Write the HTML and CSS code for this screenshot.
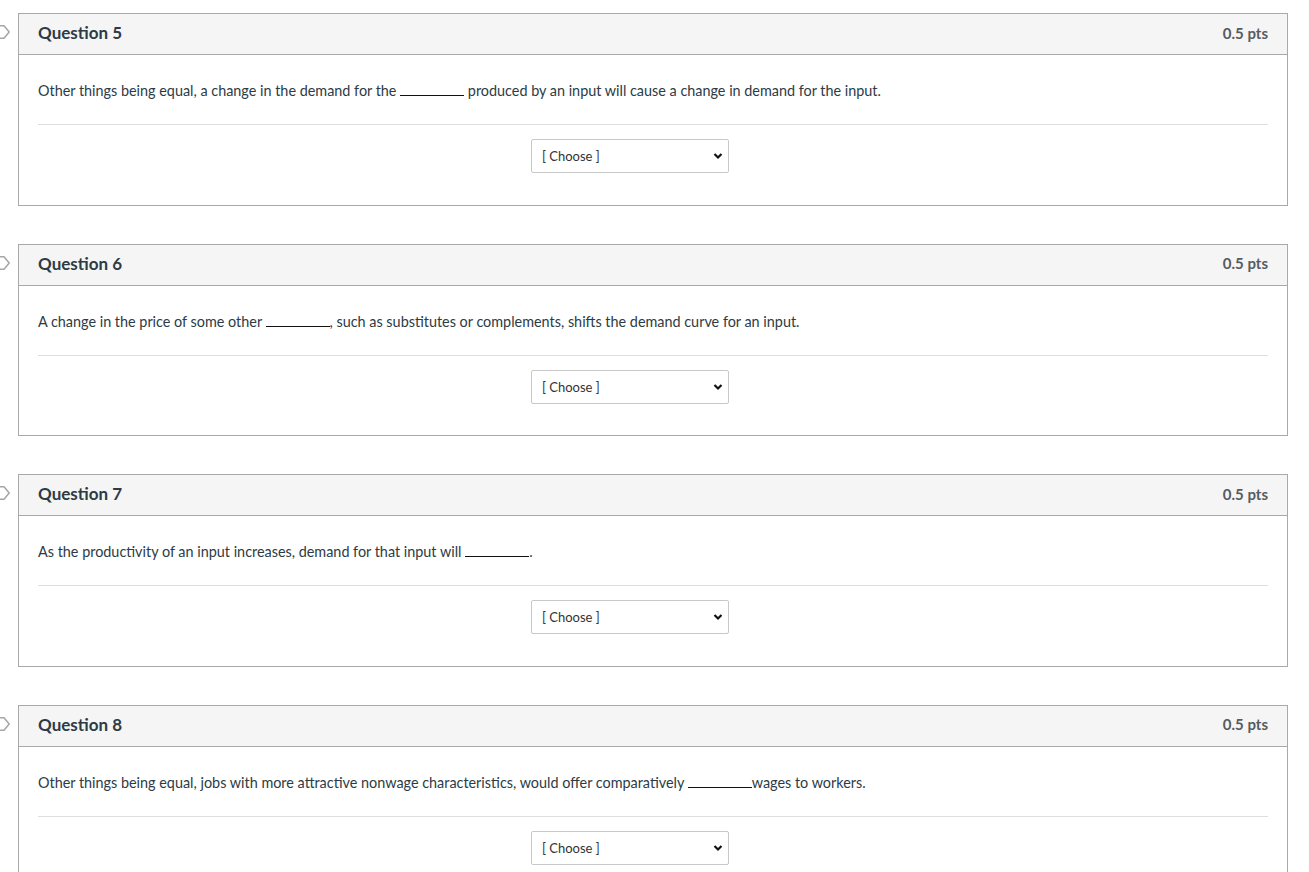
FILE: index.html
```html
<!DOCTYPE html>
<html>
<head>
<meta charset="utf-8">
<link rel="stylesheet" href="styles.css">
</head>
<body>
<div class="list">
  <div class="item">
    <svg class="flag" width="10" height="14" viewBox="0 0 10 14"><path d="M-6 0.75 H4 L9.2 7 L4 13.25 H-6" fill="#fff" stroke="#a6a6a6" stroke-width="1.5" stroke-linejoin="round"/></svg>
    <div class="question">
      <div class="header"><span class="title">Question 5</span><span class="pts">0.5 pts</span></div>
      <div class="content">
        <p class="text">Other things being equal, a change in the demand for the <span class="blank"></span> produced by an input will cause a change in demand for the input.</p>
        <div class="answers">
          <div class="select"><span>[ Choose ]</span><svg width="10" height="8" viewBox="0 0 10 8"><path d="M1.5 2 L5 5.5 L8.5 2" fill="none" stroke="#111" stroke-width="2.2"/></svg></div>
        </div>
      </div>
    </div>
  </div>
  <div class="item">
    <svg class="flag" width="10" height="14" viewBox="0 0 10 14"><path d="M-6 0.75 H4 L9.2 7 L4 13.25 H-6" fill="#fff" stroke="#a6a6a6" stroke-width="1.5" stroke-linejoin="round"/></svg>
    <div class="question">
      <div class="header"><span class="title">Question 6</span><span class="pts">0.5 pts</span></div>
      <div class="content">
        <p class="text">A change in the price of some other <span class="blank"></span>, such as substitutes or complements, shifts the demand curve for an input.</p>
        <div class="answers">
          <div class="select"><span>[ Choose ]</span><svg width="10" height="8" viewBox="0 0 10 8"><path d="M1.5 2 L5 5.5 L8.5 2" fill="none" stroke="#111" stroke-width="2.2"/></svg></div>
        </div>
      </div>
    </div>
  </div>
  <div class="item">
    <svg class="flag" width="10" height="14" viewBox="0 0 10 14"><path d="M-6 0.75 H4 L9.2 7 L4 13.25 H-6" fill="#fff" stroke="#a6a6a6" stroke-width="1.5" stroke-linejoin="round"/></svg>
    <div class="question">
      <div class="header"><span class="title">Question 7</span><span class="pts">0.5 pts</span></div>
      <div class="content">
        <p class="text">As the productivity of an input increases, demand for that input will <span class="blank"></span>.</p>
        <div class="answers">
          <div class="select"><span>[ Choose ]</span><svg width="10" height="8" viewBox="0 0 10 8"><path d="M1.5 2 L5 5.5 L8.5 2" fill="none" stroke="#111" stroke-width="2.2"/></svg></div>
        </div>
      </div>
    </div>
  </div>
  <div class="item">
    <svg class="flag" width="10" height="14" viewBox="0 0 10 14"><path d="M-6 0.75 H4 L9.2 7 L4 13.25 H-6" fill="#fff" stroke="#a6a6a6" stroke-width="1.5" stroke-linejoin="round"/></svg>
    <div class="question">
      <div class="header"><span class="title">Question 8</span><span class="pts">0.5 pts</span></div>
      <div class="content">
        <p class="text">Other things being equal, jobs with more attractive nonwage characteristics, would offer comparatively <span class="blank"></span>wages to workers.</p>
        <div class="answers">
          <div class="select"><span>[ Choose ]</span><svg width="10" height="8" viewBox="0 0 10 8"><path d="M1.5 2 L5 5.5 L8.5 2" fill="none" stroke="#111" stroke-width="2.2"/></svg></div>
        </div>
      </div>
    </div>
  </div>
</div>
</body>
</html>
```
FILE: styles.css
```css
html, body {
  margin: 0;
  padding: 0;
  background: #fff;
}
body {
  font-family: Lato, "Open Sans", "Liberation Sans", sans-serif;
  color: #2d3b45;
  overflow: hidden;
}
.list {
  padding-top: 13px;
  width: 1288px;
}
.item {
  display: flex;
  align-items: flex-start;
  margin-bottom: 38px;
}
.flag {
  flex: none;
  margin-top: 12px;
  margin-right: 8px;
}
.question {
  flex: 1;
  border: 1px solid #a9a9a9;
  height: 190.67px;
  box-sizing: content-box;
}
.header {
  background: #f5f5f5;
  border-bottom: 1px solid #a9a9a9;
  display: flex;
  align-items: center;
  justify-content: space-between;
  padding: 0 19px 3px;
  box-sizing: border-box;
  height: 41px;
}
.title {
  font-size: 17px;
  font-weight: 700;
  color: #2d3b45;
}
.pts {
  font-size: 15px;
  font-weight: 700;
  color: #555c61;
}
.content {
  padding: 0 19px;
}
.text {
  margin: 0;
  padding: 26px 0 23px;
  font-size: 14.4px;
  line-height: 20px;
  border-bottom: 1px solid #dcdfe1;
}
.blank {
  display: inline-block;
  width: 64px;
  border-bottom: 1px solid #111;
  vertical-align: baseline;
  height: 1px;
}
.answers {
  padding-top: 14px;
  padding-left: 493px;
}
.select {
  height: 32px;
  border: 1px solid #c8c8c8;
  border-radius: 2px;
  display: flex;
  align-items: center;
  justify-content: space-between;
  padding: 0 5px 0 10px;
  box-sizing: content-box;
  width: 181px;
  font-size: 13px;
  color: #333;
}
```
